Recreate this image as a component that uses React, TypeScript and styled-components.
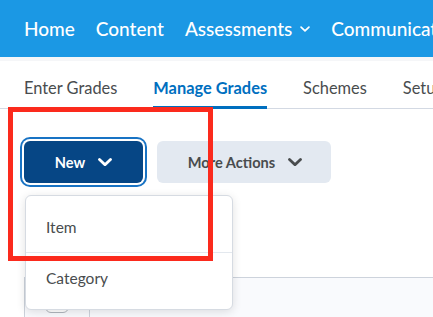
import * as React from 'react';
import styled, { createGlobalStyle } from 'styled-components';

const GlobalStyle = createGlobalStyle`
  body {
    margin: 0;
    font-family: Lato, "Open Sans", sans-serif;
    background: #ffffff;
    color: #494c4e;
    overflow: hidden;
  }
`

const Page = styled.div`
  position: relative;
  width: 433px;
  height: 317px;
  overflow: hidden;
`

const NavBar = styled.nav`
  display: flex;
  align-items: center;
  gap: 21px;
  height: 57px;
  padding-left: 24px;
  background-color: #1b98e4;
  color: #ffffff;
  white-space: nowrap;
`

const NavItem = styled.span`
  display: flex;
  align-items: center;
  gap: 8px;
  font-size: 19px;
  font-weight: 500;
`

const NavStrip = styled.div`
  height: 4px;
  background-color: #f5f6f8;
`

const TabBar = styled.div`
  display: flex;
  align-items: stretch;
  gap: 36px;
  height: 47px;
  padding-left: 24px;
  border-bottom: 1px solid #d3d9e3;
  white-space: nowrap;
`

const Tab = styled.span<{ $active?: boolean }>`
  display: flex;
  align-items: center;
  font-size: 16.4px;
  font-weight: ${p => (p.$active ? 700 : 400)};
  color: ${p => (p.$active ? '#006fbf' : '#494c4e')};
  margin-bottom: -1px;
  border-bottom: 3px solid ${p => (p.$active ? '#006fbf' : 'transparent')};
  padding-top: 8px;
`

const Toolbar = styled.div`
  display: flex;
  gap: 14px;
  padding: 32px 0 0 24px;
`

const MenuAnchor = styled.div`
  position: relative;
`

const Button = styled.button<{ $primary?: boolean }>`
  display: flex;
  align-items: center;
  justify-content: center;
  gap: 13px;
  height: 42px;
  width: ${p => (p.$primary ? '119px' : '174px')};
  border: none;
  border-radius: 6px;
  font-family: inherit;
  font-size: 14.6px;
  font-weight: 700;
  color: ${p => (p.$primary ? '#ffffff' : '#494c4e')};
  background-color: ${p => (p.$primary ? '#064685' : '#e3e9f1')};
  box-shadow: ${p => (p.$primary ? '0 0 0 2px #ffffff, 0 0 0 4px #1873c4' : 'none')};
  padding: 0 0 0 ${p => (p.$primary ? '0' : '2px')};
`

const Menu = styled.ul`
  position: absolute;
  top: calc(100% + 12px);
  left: 1px;
  z-index: 2;
  width: 206px;
  margin: 0;
  padding: 6px 0;
  list-style: none;
  background: #ffffff;
  border: 1px solid #d6dbe2;
  border-radius: 6px;
  box-shadow: 0 2px 10px rgba(0, 0, 0, 0.12);
`

const MenuItem = styled.li`
  display: flex;
  align-items: center;
  height: 50px;
  padding-left: 20px;
  font-size: 15.5px;
  color: #494c4e;
  & + & {
    border-top: 1px solid #e3e8ee;
  }
`

const Table = styled.div`
  margin: 94px 0 0 24px;
  border-top: 1px solid #cdd3dc;
  border-left: 1px solid #cdd3dc;
  background: #f9fafd;
  height: 60px;
  display: flex;
`

const SelectCell = styled.div`
  width: 64px;
  border-right: 1px solid #cdd3dc;
  display: flex;
  justify-content: center;
  padding-top: 11px;
`

const Checkbox = styled.div`
  width: 22px;
  height: 22px;
  border: 1px solid #b0b6bd;
  border-radius: 6px;
  background: #ffffff;
`

const Annotation = styled.div`
  position: absolute;
  left: 8px;
  top: 107px;
  width: 195px;
  height: 144px;
  border: 5px solid #fb2a1d;
  z-index: 3;
  pointer-events: none;
`

const Chevron = ({ size, stroke, color }: { size: number; stroke: number; color: string }) => (
  <svg width={size} height={size * 0.6} viewBox="0 0 14 8.4" fill="none">
    <polyline points="1.5,1.5 7,6.8 12.5,1.5" stroke={color} strokeWidth={stroke} strokeLinecap="round" strokeLinejoin="round" />
  </svg>
)

const App = () => (
  <Page>
    <GlobalStyle />
    <NavBar>
      <NavItem>Home</NavItem>
      <NavItem>Content</NavItem>
      <NavItem>
        Assessments
        <Chevron size={10} stroke={2.4} color="#ffffff" />
      </NavItem>
      <NavItem>Communications</NavItem>
    </NavBar>
    <NavStrip />
    <TabBar>
      <Tab>Enter Grades</Tab>
      <Tab $active>Manage Grades</Tab>
      <Tab>Schemes</Tab>
      <Tab>Setup Wizard</Tab>
    </TabBar>
    <Toolbar>
      <MenuAnchor>
        <Button $primary>
          New
          <Chevron size={14} stroke={2.8} color="#ffffff" />
        </Button>
        <Menu>
          <MenuItem>Item</MenuItem>
          <MenuItem>Category</MenuItem>
        </Menu>
      </MenuAnchor>
      <Button>
        More Actions
        <Chevron size={14} stroke={2.8} color="#494c4e" />
      </Button>
    </Toolbar>
    <Table>
      <SelectCell>
        <Checkbox />
      </SelectCell>
    </Table>
    <Annotation />
  </Page>
)

export default App;
